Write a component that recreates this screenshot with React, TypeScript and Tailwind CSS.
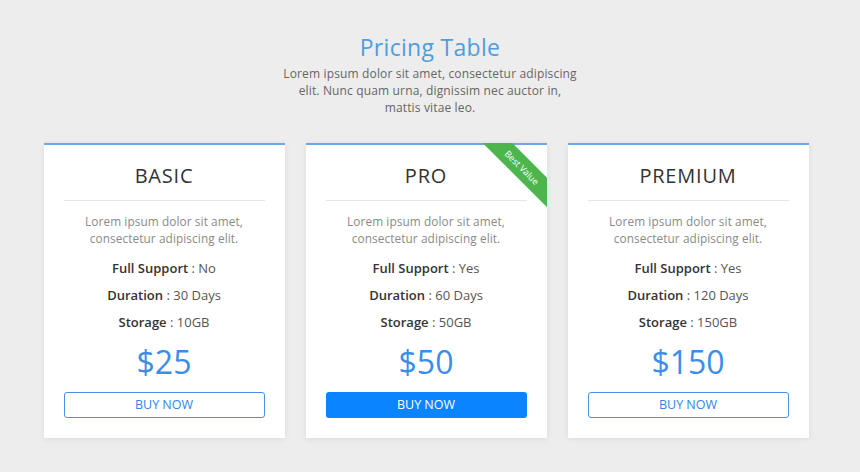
const plans = [
  { name: "BASIC", support: "No", duration: "30 Days", storage: "10GB", price: "$25", featured: false },
  { name: "PRO", support: "Yes", duration: "60 Days", storage: "50GB", price: "$50", featured: true },
  { name: "PREMIUM", support: "Yes", duration: "120 Days", storage: "150GB", price: "$150", featured: false },
];

function PlanCard({ plan }: { plan: (typeof plans)[number] }) {
  return (
    <div className="relative w-[241px] h-[295px] overflow-hidden bg-white shadow-[0_1px_6px_rgba(0,0,0,0.08)] px-5 flex flex-col items-center">
      <div className="-mx-5 w-[241px] h-[2px] shrink-0 bg-[#6ba6e8]" />
      {plan.featured ? (
        <div className="absolute left-[164px] top-[14px] w-[104px] h-[21px] rotate-45 bg-[#4cb64c] flex items-center justify-center text-[9px] text-white">
          Best Value
        </div>
      ) : null}
      <div className="w-full pt-[18px] pb-[11px] border-b border-[#e6e6e6] text-center text-[20px] leading-[26px] text-[#333] tracking-[0.8px]">
        {plan.name}
      </div>
      <p className="mt-[12px] text-center text-[11.8px] leading-[17px] tracking-[0.1px] text-[#8a8a8a]">
        Lorem ipsum dolor sit amet,
        <br />
        consectetur adipiscing elit.
      </p>
      <div className="mt-[12px] flex flex-col items-center gap-[9px] text-[13px] leading-[18px] text-[#555]">
        <div>
          <span className="font-semibold text-[#333]">Full Support</span> : {plan.support}
        </div>
        <div>
          <span className="font-semibold text-[#333]">Duration</span> : {plan.duration}
        </div>
        <div>
          <span className="font-semibold text-[#333]">Storage</span> : {plan.storage}
        </div>
      </div>
      <div className="mt-[11px] text-[32px] leading-[40px] text-[#3a8ee8]">{plan.price}</div>
      <button
        className={`mt-[10px] w-full h-[26px] shrink-0 rounded-[3px] text-[12.5px] ${
          plan.featured ? "bg-[#0a84ff] text-white" : "border border-[#4a90e6] text-[#2f86e8]"
        }`}
      >
        BUY NOW
      </button>
    </div>
  );
}

export default function App() {
  return (
    <div className="w-[860px] h-[472px] bg-[#ededed] flex flex-col items-center font-['Open_Sans',sans-serif]">
      <h1 className="mt-[32px] text-[23px] leading-[30px] text-[#4d9de0] tracking-[0.3px]">Pricing Table</h1>
      <p className="w-[296px] mt-[3px] text-center text-[12px] leading-[17px] tracking-[0.15px] text-[#666]">
        Lorem ipsum dolor sit amet, consectetur adipiscing elit. Nunc quam urna, dignissim nec auctor in, mattis vitae leo.
      </p>
      <div className="mt-[27px] flex gap-[21px] ml-[-8px]">
        {plans.map((p) => (
          <PlanCard key={p.name} plan={p} />
        ))}
      </div>
    </div>
  );
}
